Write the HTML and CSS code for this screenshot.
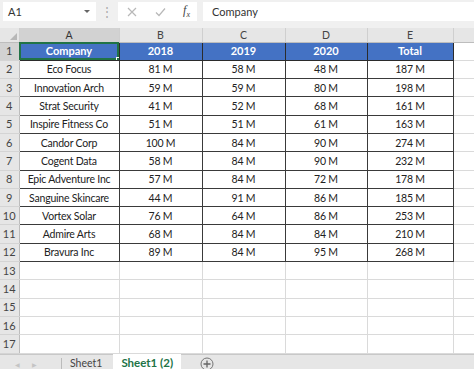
FILE: index.html
```html
<!DOCTYPE html>
<html lang="en">
<head>
    <meta charset="UTF-8">
    <title>Sheet1 (2)</title>
    <link rel="stylesheet" href="styles.css">
</head>
<body>
    <div class="toolbar">
        <div class="name-box">
            <span>A1</span>
            <span class="caret"></span>
        </div>
        <div class="dots">&#8942;</div>
        <div class="fx-box">
            <svg width="10" height="10" viewBox="0 0 10 10"><path d="M1 1 L9 9 M9 1 L1 9" stroke="#b8b8b8" stroke-width="1.2" fill="none"/></svg>
            <svg width="11" height="10" viewBox="0 0 11 10"><path d="M1 5.5 L4 8.5 L10 1.5" stroke="#b8b8b8" stroke-width="1.2" fill="none"/></svg>
            <span class="fx">f<sub>x</sub></span>
        </div>
        <div class="formula">Company</div>
    </div>

    <table class="sheet">
        <colgroup>
            <col class="c-head">
            <col class="c-a">
            <col class="c-b">
            <col class="c-c">
            <col class="c-d">
            <col class="c-e">
            <col class="c-f">
        </colgroup>
        <thead>
            <tr class="letters">
                <th class="corner"><span class="corner-tri"></span></th>
                <th class="sel">A</th>
                <th>B</th>
                <th>C</th>
                <th>D</th>
                <th>E</th>
                <th></th>
            </tr>
        </thead>
        <tbody>
            <tr class="title-row">
                <td class="num sel">1</td>
                <td class="blue active">Company<span class="handle"></span></td>
                <td class="blue">2018</td>
                <td class="blue">2019</td>
                <td class="blue">2020</td>
                <td class="blue">Total</td>
                <td class="empty"></td>
            </tr>
            <tr><td class="num">2</td><td class="cell">Eco Focus</td><td class="cell">81 M</td><td class="cell">58 M</td><td class="cell">48 M</td><td class="cell">187 M</td><td class="empty"></td></tr>
            <tr><td class="num">3</td><td class="cell">Innovation Arch</td><td class="cell">59 M</td><td class="cell">59 M</td><td class="cell">80 M</td><td class="cell">198 M</td><td class="empty"></td></tr>
            <tr><td class="num">4</td><td class="cell">Strat Security</td><td class="cell">41 M</td><td class="cell">52 M</td><td class="cell">68 M</td><td class="cell">161 M</td><td class="empty"></td></tr>
            <tr><td class="num">5</td><td class="cell">Inspire Fitness Co</td><td class="cell">51 M</td><td class="cell">51 M</td><td class="cell">61 M</td><td class="cell">163 M</td><td class="empty"></td></tr>
            <tr><td class="num">6</td><td class="cell">Candor Corp</td><td class="cell">100 M</td><td class="cell">84 M</td><td class="cell">90 M</td><td class="cell">274 M</td><td class="empty"></td></tr>
            <tr><td class="num">7</td><td class="cell">Cogent Data</td><td class="cell">58 M</td><td class="cell">84 M</td><td class="cell">90 M</td><td class="cell">232 M</td><td class="empty"></td></tr>
            <tr><td class="num">8</td><td class="cell">Epic Adventure Inc</td><td class="cell">57 M</td><td class="cell">84 M</td><td class="cell">72 M</td><td class="cell">178 M</td><td class="empty"></td></tr>
            <tr><td class="num">9</td><td class="cell">Sanguine Skincare</td><td class="cell">44 M</td><td class="cell">91 M</td><td class="cell">86 M</td><td class="cell">185 M</td><td class="empty"></td></tr>
            <tr><td class="num">10</td><td class="cell">Vortex Solar</td><td class="cell">76 M</td><td class="cell">64 M</td><td class="cell">86 M</td><td class="cell">253 M</td><td class="empty"></td></tr>
            <tr><td class="num">11</td><td class="cell">Admire Arts</td><td class="cell">68 M</td><td class="cell">84 M</td><td class="cell">84 M</td><td class="cell">210 M</td><td class="empty"></td></tr>
            <tr><td class="num">12</td><td class="cell">Bravura Inc</td><td class="cell">89 M</td><td class="cell">84 M</td><td class="cell">95 M</td><td class="cell">268 M</td><td class="empty"></td></tr>
            <tr><td class="num">13</td><td class="empty"></td><td class="empty"></td><td class="empty"></td><td class="empty"></td><td class="empty"></td><td class="empty"></td></tr>
            <tr><td class="num">14</td><td class="empty"></td><td class="empty"></td><td class="empty"></td><td class="empty"></td><td class="empty"></td><td class="empty"></td></tr>
            <tr><td class="num">15</td><td class="empty"></td><td class="empty"></td><td class="empty"></td><td class="empty"></td><td class="empty"></td><td class="empty"></td></tr>
            <tr><td class="num">16</td><td class="empty"></td><td class="empty"></td><td class="empty"></td><td class="empty"></td><td class="empty"></td><td class="empty"></td></tr>
            <tr><td class="num">17</td><td class="empty"></td><td class="empty"></td><td class="empty"></td><td class="empty"></td><td class="empty"></td><td class="empty"></td></tr>
        </tbody>
    </table>

    <div class="tabs">
        <div class="nav">
            <span>&#9664;</span>
            <span>&#9654;</span>
        </div>
        <div class="tab">Sheet1</div>
        <div class="tab current">Sheet1 (2)</div>
        <div class="add">
            <svg width="14" height="14" viewBox="0 0 14 14"><circle cx="7" cy="7" r="6" stroke="#777" stroke-width="1" fill="none"/><path d="M7 3.5 V10.5 M3.5 7 H10.5" stroke="#666" stroke-width="1.3"/></svg>
        </div>
    </div>
</body>
</html>
```

FILE: styles.css
```css
body {
    margin: 0;
    width: 474px;
    height: 369px;
    overflow: hidden;
    background: #fff;
    font-family: Lato, "Open Sans", sans-serif;
    font-size: 11px;
    color: #222;
}

/* formula bar */
.toolbar {
    height: 28px;
    background: #f0f0f0;
    display: flex;
    align-items: flex-start;
    padding-top: 2px;
    box-sizing: border-box;
}

.name-box {
    width: 93px;
    height: 19px;
    margin-left: 3px;
    background: #fff;
    display: flex;
    align-items: center;
    justify-content: space-between;
    padding: 0 6px 0 5px;
    box-sizing: border-box;
    color: #333;
    font-size: 11px;
}

.caret {
    width: 0;
    height: 0;
    border-left: 3px solid transparent;
    border-right: 3px solid transparent;
    border-top: 3px solid #666;
}

.dots {
    width: 22px;
    text-align: center;
    color: #aaa;
    font-size: 12px;
    line-height: 19px;
}

.fx-box {
    width: 79px;
    height: 19px;
    background: #fff;
    display: flex;
    align-items: center;
    justify-content: space-between;
    padding: 0 7px 0 9px;
    box-sizing: border-box;
}

.fx {
    font-family: "Liberation Serif", serif;
    font-style: italic;
    font-size: 12px;
    color: #444;
}

.fx sub {
    font-size: 8px;
}

.formula {
    flex: 1;
    height: 19px;
    margin-left: 6px;
    background: #fff;
    padding-left: 9px;
    line-height: 19px;
    color: #333;
    font-size: 11px;
}

/* grid */
.sheet {
    border-collapse: collapse;
    table-layout: fixed;
    width: 492px;
}

.c-head { width: 19px; }
.c-a { width: 100px; }
.c-b { width: 83px; }
.c-c { width: 83px; }
.c-d { width: 82px; }
.c-e { width: 86px; }
.c-f { width: 39px; }

.letters th {
    height: 13.5px;
    padding: 0;
    background: #e6e6e6;
    border-right: 1px solid #cfcfcf;
    border-bottom: 1px solid #bdbdbd;
    font-weight: normal;
    font-size: 10.5px;
    line-height: 12px;
    color: #444;
}

.letters th.sel {
    background: #d2d2d2;
    color: #333;
}

.corner {
    position: relative;
}

.corner-tri {
    position: absolute;
    right: 2px;
    bottom: 2px;
    width: 0;
    height: 0;
    border-left: 7px solid transparent;
    border-bottom: 7px solid #b7b7b7;
}

tbody td {
    height: 17.3px;
    padding: 0;
    text-align: center;
    white-space: nowrap;
    overflow: hidden;
    font-size: 10.5px;
    letter-spacing: -0.2px;
    line-height: 14px;
}

td.num {
    background: #e6e6e6;
    border-right: 1px solid #bdbdbd;
    border-bottom: 1px solid #d4d4d4;
    color: #444;
    font-size: 11px;
    letter-spacing: 0;
}

td.num.sel {
    background: #d2d2d2;
}

td.blue {
    background: #4472c4;
    color: #fff;
    font-weight: bold;
    border: 1px solid #2b2b2b;
    font-size: 11px;
    letter-spacing: 0;
}

td.active {
    position: relative;
    outline: 2px solid #217346;
    outline-offset: -2px;
}

.handle {
    position: absolute;
    right: -3px;
    bottom: -3px;
    width: 4px;
    height: 4px;
    background: #217346;
    border: 1px solid #fff;
}

td.cell {
    border: 1px solid #3a3a3a;
    color: #222;
}

td.empty {
    border-right: 1px solid #dadada;
    border-bottom: 1px solid #dadada;
}

/* sheet tabs */
.tabs {
    height: 19px;
    background: #e6e6e6;
    border-top: 1px solid #c8c8c8;
    display: flex;
    align-items: stretch;
    font-size: 10.5px;
}

.nav {
    width: 62px;
    display: flex;
    gap: 12px;
    padding-left: 15px;
    align-items: center;
    color: #c4c4c4;
    font-size: 6px;
    border-right: 1px solid #bbb;
    box-sizing: border-box;
    margin: 3px 0;
}

.tab {
    padding: 0 11px 0 8px;
    line-height: 17px;
    color: #444;
}

.tab.current {
    background: #fff;
    color: #217346;
    font-weight: bold;
    font-size: 11.5px;
    border-bottom: 2px solid #217346;
    padding: 0 8px;
    margin-top: -1px;
}

.add {
    padding-left: 19px;
    display: flex;
    align-items: center;
}
```
